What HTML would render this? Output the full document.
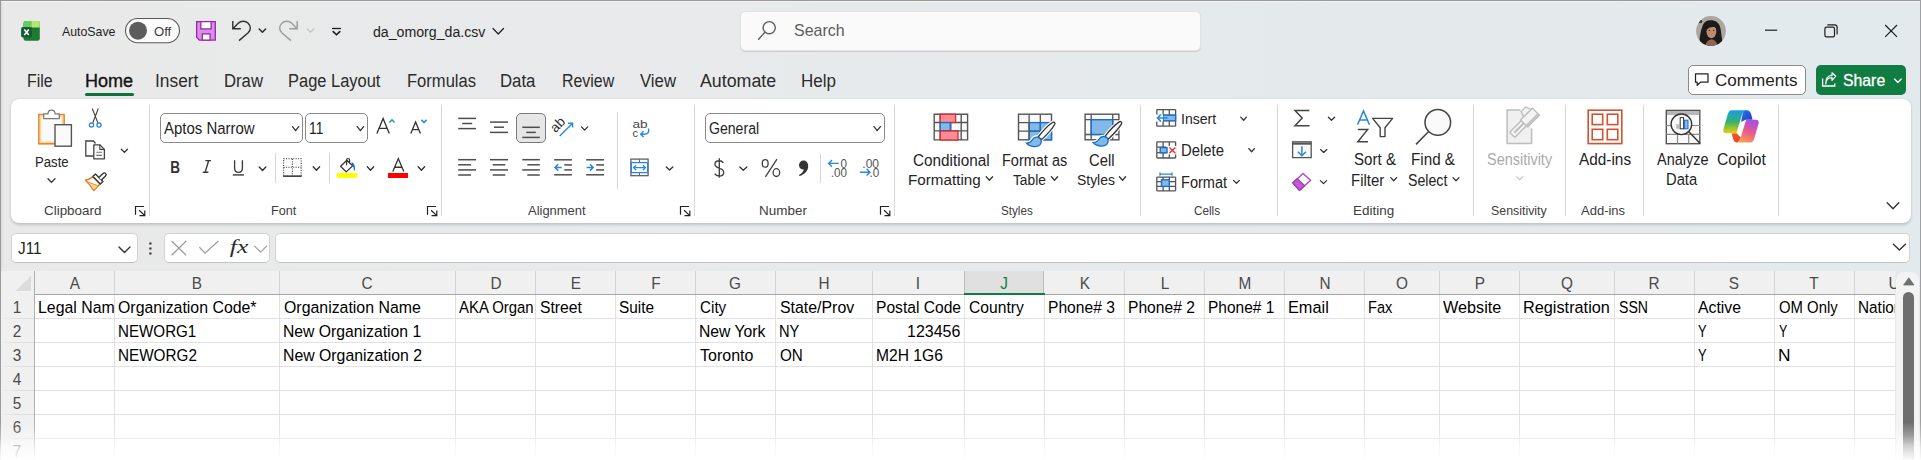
<!DOCTYPE html>
<html><head><meta charset="utf-8">
<style>
*{margin:0;padding:0}
html,body{width:1921px;height:460px;overflow:hidden}
body{position:relative;background:linear-gradient(90deg,#e9e9e9 0%,#e8eaeb 35%,#e5eaec 60%,#e3eaed 100%);font-family:"Liberation Sans",sans-serif}
.t{position:absolute;white-space:nowrap;transform-origin:0 0}
.abs{position:absolute}
</style></head><body>
<!-- window border -->
<div class="abs" style="left:0;top:0;width:1921px;height:1px;background:#9a9a9a"></div><div class="abs" style="left:1px;top:1px;width:1919px;height:1px;background:rgba(255,255,255,0.45)"></div>
<div class="abs" style="left:0;top:0;width:1px;height:460px;background:#9a9a9a;box-shadow:1px 0 2px rgba(0,0,0,0.10)"></div>
<div class="abs" style="left:1920px;top:0;width:1px;height:460px;background:#a0a0a0"></div>

<!-- search box -->
<div class="abs" style="left:741px;top:12px;width:459px;height:38px;background:#fafafa;border-radius:4.5px;box-shadow:0 0 0 1px #e2e2e2,0 1px 1px 1px rgba(0,0,0,0.12)"></div>
<!-- comments / share -->
<div class="abs" style="left:1688px;top:65px;width:118px;height:30px;background:#fff;border:1px solid #8a8a8a;border-radius:5px;box-sizing:border-box"></div>
<div class="abs" style="left:1816px;top:65px;width:90px;height:30px;background:#107c41;border-radius:5px"></div>
<!-- home underline -->
<div class="abs" style="left:85px;top:93px;width:49px;height:3px;background:#0f703b;border-radius:2px"></div>

<!-- ribbon card -->
<div class="abs" style="left:11px;top:99px;width:1900px;height:124px;background:#fff;border-radius:8px;box-shadow:0 1.5px 3px rgba(0,0,0,0.16),0 0 1px rgba(0,0,0,0.12)"></div>
<!-- group separators -->
<div class="abs" style="left:149px;top:105px;width:1px;height:111px;background:#d6d6d6"></div><div class="abs" style="left:441px;top:105px;width:1px;height:111px;background:#d6d6d6"></div><div class="abs" style="left:694px;top:105px;width:1px;height:111px;background:#d6d6d6"></div><div class="abs" style="left:894px;top:105px;width:1px;height:111px;background:#d6d6d6"></div><div class="abs" style="left:1140px;top:105px;width:1px;height:111px;background:#d6d6d6"></div><div class="abs" style="left:1277px;top:105px;width:1px;height:111px;background:#d6d6d6"></div><div class="abs" style="left:1473px;top:105px;width:1px;height:111px;background:#d6d6d6"></div><div class="abs" style="left:1565px;top:105px;width:1px;height:111px;background:#d6d6d6"></div><div class="abs" style="left:1643px;top:105px;width:1px;height:111px;background:#d6d6d6"></div><div class="abs" style="left:1778px;top:105px;width:1px;height:111px;background:#d6d6d6"></div>
<div class="abs" style="left:617px;top:112px;width:1px;height:77px;background:#d6d6d6"></div>
<div class="abs" style="left:275px;top:153px;width:1px;height:30px;background:#d6d6d6"></div>
<div class="abs" style="left:329px;top:153px;width:1px;height:30px;background:#d6d6d6"></div>
<div class="abs" style="left:820px;top:154px;width:1px;height:29px;background:#d6d6d6"></div>
<!-- combo boxes -->
<div class="abs" style="left:160px;top:113px;width:143px;height:30px;border:1px solid #8a8a8a;border-radius:5px;box-sizing:border-box"></div>
<div class="abs" style="left:305px;top:113px;width:63px;height:30px;border:1px solid #8a8a8a;border-radius:5px;box-sizing:border-box"></div>
<div class="abs" style="left:705px;top:113px;width:180px;height:30px;border:1px solid #8a8a8a;border-radius:5px;box-sizing:border-box"></div>
<div class="abs" style="left:516px;top:113px;width:30px;height:30px;background:#e6e6e6;border:1px solid #7a7a7a;border-radius:5px;box-sizing:border-box"></div>

<!-- formula bar -->
<div class="abs" style="left:11px;top:233px;width:127px;height:30px;background:#fff;border:1px solid #d2d2d2;border-bottom-color:#c2c2c2;border-radius:5px;box-sizing:border-box"></div>
<div class="abs" style="left:164px;top:233px;width:106px;height:30px;background:#fff;border:1px solid #d2d2d2;border-bottom-color:#c2c2c2;border-radius:5px;box-sizing:border-box"></div>
<div class="abs" style="left:275px;top:233px;width:1635px;height:30px;background:#fff;border:1px solid #d2d2d2;border-bottom-color:#c2c2c2;border-radius:5px;box-sizing:border-box"></div>

<!-- grid -->
<div class="abs" style="left:1px;top:271px;width:1894px;height:24px;background:#f0f0f0"></div>
<div class="abs" style="left:1px;top:295px;width:34px;height:170px;background:#f0f0f0"></div>
<div class="abs" style="left:35px;top:295px;width:1860px;height:170px;background:#fff"></div>
<div style="position:absolute;left:114px;top:271px;width:1px;height:23px;background:#d4d4d4"></div><div style="position:absolute;left:114px;top:295px;width:1px;height:170px;background:#e1e1e1"></div><div style="position:absolute;left:279px;top:271px;width:1px;height:23px;background:#d4d4d4"></div><div style="position:absolute;left:279px;top:295px;width:1px;height:170px;background:#e1e1e1"></div><div style="position:absolute;left:455px;top:271px;width:1px;height:23px;background:#d4d4d4"></div><div style="position:absolute;left:455px;top:295px;width:1px;height:170px;background:#e1e1e1"></div><div style="position:absolute;left:535px;top:271px;width:1px;height:23px;background:#d4d4d4"></div><div style="position:absolute;left:535px;top:295px;width:1px;height:170px;background:#e1e1e1"></div><div style="position:absolute;left:615px;top:271px;width:1px;height:23px;background:#d4d4d4"></div><div style="position:absolute;left:615px;top:295px;width:1px;height:170px;background:#e1e1e1"></div><div style="position:absolute;left:695px;top:271px;width:1px;height:23px;background:#d4d4d4"></div><div style="position:absolute;left:695px;top:295px;width:1px;height:170px;background:#e1e1e1"></div><div style="position:absolute;left:775px;top:271px;width:1px;height:23px;background:#d4d4d4"></div><div style="position:absolute;left:775px;top:295px;width:1px;height:170px;background:#e1e1e1"></div><div style="position:absolute;left:872px;top:271px;width:1px;height:23px;background:#d4d4d4"></div><div style="position:absolute;left:872px;top:295px;width:1px;height:170px;background:#e1e1e1"></div><div style="position:absolute;left:964px;top:271px;width:1px;height:23px;background:#d4d4d4"></div><div style="position:absolute;left:964px;top:295px;width:1px;height:170px;background:#e1e1e1"></div><div style="position:absolute;left:964px;top:271px;width:80px;height:22px;background:#e0e0e0;border-left:1px solid #bdbdbd;border-right:1px solid #bdbdbd;box-sizing:border-box"></div><div style="position:absolute;left:964px;top:293px;width:81px;height:2px;background:#107c41"></div><div style="position:absolute;left:1044px;top:295px;width:1px;height:170px;background:#e1e1e1"></div><div style="position:absolute;left:1124px;top:271px;width:1px;height:23px;background:#d4d4d4"></div><div style="position:absolute;left:1124px;top:295px;width:1px;height:170px;background:#e1e1e1"></div><div style="position:absolute;left:1204px;top:271px;width:1px;height:23px;background:#d4d4d4"></div><div style="position:absolute;left:1204px;top:295px;width:1px;height:170px;background:#e1e1e1"></div><div style="position:absolute;left:1284px;top:271px;width:1px;height:23px;background:#d4d4d4"></div><div style="position:absolute;left:1284px;top:295px;width:1px;height:170px;background:#e1e1e1"></div><div style="position:absolute;left:1364px;top:271px;width:1px;height:23px;background:#d4d4d4"></div><div style="position:absolute;left:1364px;top:295px;width:1px;height:170px;background:#e1e1e1"></div><div style="position:absolute;left:1439px;top:271px;width:1px;height:23px;background:#d4d4d4"></div><div style="position:absolute;left:1439px;top:295px;width:1px;height:170px;background:#e1e1e1"></div><div style="position:absolute;left:1519px;top:271px;width:1px;height:23px;background:#d4d4d4"></div><div style="position:absolute;left:1519px;top:295px;width:1px;height:170px;background:#e1e1e1"></div><div style="position:absolute;left:1614px;top:271px;width:1px;height:23px;background:#d4d4d4"></div><div style="position:absolute;left:1614px;top:295px;width:1px;height:170px;background:#e1e1e1"></div><div style="position:absolute;left:1694px;top:271px;width:1px;height:23px;background:#d4d4d4"></div><div style="position:absolute;left:1694px;top:295px;width:1px;height:170px;background:#e1e1e1"></div><div style="position:absolute;left:1774px;top:271px;width:1px;height:23px;background:#d4d4d4"></div><div style="position:absolute;left:1774px;top:295px;width:1px;height:170px;background:#e1e1e1"></div><div style="position:absolute;left:1854px;top:271px;width:1px;height:23px;background:#d4d4d4"></div><div style="position:absolute;left:1854px;top:295px;width:1px;height:170px;background:#e1e1e1"></div><div style="position:absolute;left:1934px;top:271px;width:1px;height:23px;background:#d4d4d4"></div><div style="position:absolute;left:1934px;top:295px;width:1px;height:170px;background:#e1e1e1"></div><div style="position:absolute;left:35px;top:318px;width:1860px;height:1px;background:#e1e1e1"></div><div style="position:absolute;left:0px;top:318px;width:34px;height:1px;background:linear-gradient(90deg,rgba(222,222,222,0) 0%,#dedede 55%)"></div><div style="position:absolute;left:35px;top:342px;width:1860px;height:1px;background:#e1e1e1"></div><div style="position:absolute;left:0px;top:342px;width:34px;height:1px;background:linear-gradient(90deg,rgba(222,222,222,0) 0%,#dedede 55%)"></div><div style="position:absolute;left:35px;top:366px;width:1860px;height:1px;background:#e1e1e1"></div><div style="position:absolute;left:0px;top:366px;width:34px;height:1px;background:linear-gradient(90deg,rgba(222,222,222,0) 0%,#dedede 55%)"></div><div style="position:absolute;left:35px;top:390px;width:1860px;height:1px;background:#e1e1e1"></div><div style="position:absolute;left:0px;top:390px;width:34px;height:1px;background:linear-gradient(90deg,rgba(222,222,222,0) 0%,#dedede 55%)"></div><div style="position:absolute;left:35px;top:414px;width:1860px;height:1px;background:#e1e1e1"></div><div style="position:absolute;left:0px;top:414px;width:34px;height:1px;background:linear-gradient(90deg,rgba(222,222,222,0) 0%,#dedede 55%)"></div><div style="position:absolute;left:35px;top:438px;width:1860px;height:1px;background:#e1e1e1"></div><div style="position:absolute;left:0px;top:438px;width:34px;height:1px;background:linear-gradient(90deg,rgba(222,222,222,0) 0%,#dedede 55%)"></div><div style="position:absolute;left:35px;top:462px;width:1860px;height:1px;background:#e1e1e1"></div><div style="position:absolute;left:0px;top:462px;width:34px;height:1px;background:linear-gradient(90deg,rgba(222,222,222,0) 0%,#dedede 55%)"></div>
<div class="abs" style="left:35px;top:294px;width:1860px;height:1px;background:#a6a6a6"></div>
<div class="abs" style="left:34px;top:271px;width:1px;height:190px;background:#b0b0b0"></div>
<div class="abs" style="left:964px;top:293px;width:81px;height:2px;background:#107c41"></div>

<svg class="abs" style="left:0;top:0" width="1921" height="460" viewBox="0 0 1921 460">
<defs><clipPath id="xlc"><rect x="23.5" y="21" width="16.3" height="19.8" rx="2.2"/></clipPath></defs>
<g clip-path="url(#xlc)"><rect x="23" y="20" width="18" height="22" fill="#1e7a32"/>
<rect x="23" y="20" width="8.3" height="7.5" fill="#64cf5f"/><rect x="31.3" y="20" width="9" height="7.5" fill="#b4e86f"/></g>
<rect x="21.1" y="27" width="10.9" height="10.5" rx="1.8" fill="#145c33"/>
<path d="M24.3,29.6 L28.8,35 M28.8,29.6 L24.3,35" stroke="#fff" stroke-width="1.6"/>
<rect x="125.5" y="18.5" width="54" height="24.2" rx="12.1" fill="#fbfbfb" stroke="#5a5a5a" stroke-width="1.1"/>
<circle cx="138" cy="30.7" r="9" fill="#5c5c5c"/>
<path d="M196.6,21.6 H215.3 V40.1 H199.4 L196.6,37.3 Z" fill="#d98fe3" stroke="#9a27ad" stroke-width="1.3"/>
<rect x="200.8" y="21.6" width="10.3" height="7.3" fill="#fff" stroke="#9a27ad" stroke-width="1.3"/>
<rect x="202.3" y="33.9" width="7.8" height="6.2" fill="#fff" stroke="#9a27ad" stroke-width="1.3"/>
<path d="M232.8,21 V28.8 H240.8 M233.2,28.4 L238.2,23.3 C241,20.5 245.5,20.5 248.2,23.2 C251,26 251,30 248.2,32.8 L239,40.6" fill="none" stroke="#333" stroke-width="1.45"/>
<polyline points="259.2,29 262.4,32.2 265.6,29" fill="none" stroke="#2b2b2b" stroke-width="1.5" stroke-linecap="round" stroke-linejoin="round"/>
<path d="M297.2,21 V28.8 H289.2 M296.8,28.4 L291.8,23.3 C289,20.5 284.5,20.5 281.8,23.2 C279,26 279,30 281.8,32.8 L291,40.6" fill="none" stroke="#9e9e9e" stroke-width="1.45"/>
<polyline points="307.2,29 310.4,32.2 313.6,29" fill="none" stroke="#c4c4c4" stroke-width="1.3" stroke-linecap="round" stroke-linejoin="round"/>
<path d="M332,28.5 H341" stroke="#1f1f1f" stroke-width="1.3"/>
<polyline points="333.2,31.6 336.5,34.8 339.8,31.6" fill="none" stroke="#1f1f1f" stroke-width="1.6" stroke-linecap="round" stroke-linejoin="round"/>
<polyline points="493,28.5 498.25,34 503.5,28.5" fill="none" stroke="#242424" stroke-width="1.3" stroke-linecap="round" stroke-linejoin="round"/>
<circle cx="769.2" cy="27.7" r="6.1" fill="none" stroke="#5f5f5f" stroke-width="1.4"/><path d="M764.9,32.2 L758.6,39.2" stroke="#5f5f5f" stroke-width="1.4" stroke-linecap="round"/>
<defs><clipPath id="avc"><circle cx="1711" cy="31" r="14.9"/></clipPath></defs>
<g clip-path="url(#avc)"><rect x="1695" y="15" width="32" height="32" fill="#aba79f"/>
<circle cx="1700.5" cy="21.5" r="1.8" fill="#2c3b2a"/>
<path d="M1699.5,47 C1699,39 1700.5,31 1702.5,26 C1704.5,21 1707.5,20.2 1711,20.2 C1715,20.2 1718.5,22.2 1720,26.5 C1721.6,31.5 1721,39 1724.5,47 Z" fill="#1e1a18"/>
<path d="M1705,47 C1706,42.5 1708,39.5 1711.5,39.5 C1715,39.5 1717,42.5 1718,47 Z" fill="#8f6656"/>
<ellipse cx="1711.4" cy="31.4" rx="4.9" ry="6.9" fill="#b98c74"/>
<path d="M1705.8,30.5 C1705.8,25 1708.5,23.6 1711.2,23.6 C1714.2,23.6 1716.8,25.6 1717,28.5 C1714.5,26.2 1709.5,26.5 1705.8,30.5 Z" fill="#1e1a18"/>
<circle cx="1709.3" cy="30.4" r="0.7" fill="#3a2a22"/><circle cx="1713.7" cy="30.4" r="0.7" fill="#3a2a22"/>
</g>
<path d="M1765,30.2 H1777.2" stroke="#1f1f1f" stroke-width="1.2"/>
<rect x="1824.9" y="27.1" width="9.6" height="9.8" rx="1.6" fill="none" stroke="#1f1f1f" stroke-width="1.2"/><path d="M1827.3,24.8 H1834.6 C1836.2,24.8 1837.1,25.8 1837.1,27.3 V34.6" fill="none" stroke="#1f1f1f" stroke-width="1.2"/>
<path d="M1885.2,25 L1897,36.8 M1897,25 L1885.2,36.8" stroke="#1f1f1f" stroke-width="1.2"/>
<path d="M1695.5,73.8 H1708 V82.2 H1700.5 L1697.2,85.3 V82.2 H1695.5 Z" fill="none" stroke="#242424" stroke-width="1.25" stroke-linejoin="round"/>
<path d="M1822.6,78.5 V86 H1834.8 V83.5" fill="none" stroke="#fff" stroke-width="1.3"/><path d="M1825.8,84 C1825.8,79.5 1828.5,77.6 1832,77.6 V80.4 L1835.8,76.2 L1832,72.8 V75.4 C1827.5,75.4 1825.5,79 1825.8,84 Z" fill="none" stroke="#fff" stroke-width="1.2" stroke-linejoin="round"/>
<polyline points="1894.5,79 1897.85,82.5 1901.2,79" fill="none" stroke="#fff" stroke-width="1.3" stroke-linecap="round" stroke-linejoin="round"/>
<rect x="38.9" y="114.6" width="25.2" height="29.2" fill="#fafafa" stroke="#e8832a" stroke-width="1.6"/>
<rect x="40.5" y="116.2" width="22" height="26" fill="none" stroke="#fcd58e" stroke-width="1.4"/>
<path d="M43.7,113.8 H48 C48,108.8 55,108.8 55,113.8 H59.3 V118.6 H43.7 Z" fill="#fff" stroke="#7a7a7a" stroke-width="1.3" stroke-linejoin="round"/>
<rect x="55" y="124.7" width="16.4" height="21.5" fill="#fafafa" stroke="#555" stroke-width="1.4"/>
<polyline points="48,178.8 51.5,182.4 55,178.8" fill="none" stroke="#333" stroke-width="1.3" stroke-linecap="round" stroke-linejoin="round"/>
<path d="M92.3,108.5 L97.8,122.8 M98.3,108.5 L92.8,122.8" stroke="#444" stroke-width="1.1"/>
<circle cx="91.5" cy="125.1" r="2.1" fill="#fff" stroke="#2b88d8" stroke-width="1.3"/><circle cx="99" cy="125.1" r="2.1" fill="#fff" stroke="#2b88d8" stroke-width="1.3"/>
<path d="M93.2,156 H85.8 V141 H93.5 L95.5,143.5" fill="none" stroke="#444" stroke-width="1.3"/>
<path d="M93.8,144.8 H99.8 L104.4,149.4 V158.8 H93.8 Z" fill="#fafafa" stroke="#444" stroke-width="1.3" stroke-linejoin="round"/><path d="M99.8,144.8 V149.4 H104.4" fill="none" stroke="#444" stroke-width="1.1"/>
<path d="M96.3,152.2 H102 M96.3,155.4 H102" stroke="#777" stroke-width="1.1"/>
<polyline points="121.3,149.3 124.4,152.4 127.5,149.3" fill="none" stroke="#333" stroke-width="1.3" stroke-linecap="round" stroke-linejoin="round"/>
<path d="M85.4,180.3 C88,179.8 90.5,178.6 92.9,176.6 L100.2,183.9 C98,186 96,188.2 93.8,190.5 C91.5,187 88.5,183.2 85.4,180.3 Z" fill="#fafafa" stroke="#e8832a" stroke-width="1.5" stroke-linejoin="round"/>
<path d="M89.8,183.6 L97.4,186.2 L93.9,189.6 Z" fill="#fbd98a"/><path d="M87.2,181.8 L97.8,185.8" stroke="#e8832a" stroke-width="1"/>
<path d="M92.9,176.6 L95.4,174.1 L102.9,181.5 L100.3,184 Z" fill="#fff" stroke="#333" stroke-width="1.35" stroke-linejoin="round"/>
<path d="M98.9,177.6 L103,173.5 C103.8,172.7 105,172.7 105.6,173.4 C106.3,174.1 106.3,175.2 105.5,176 L101.4,180.1" fill="#fff" stroke="#333" stroke-width="1.35"/>
<path d="M135.5,214.7 V206.5 H144.1" fill="none" stroke="#222" stroke-width="1.2"/><path d="M139.1,210.3 L144.8,215.6 M144.8,210.5 V215.6 H139.5" fill="none" stroke="#222" stroke-width="1.2"/>
<path d="M427.5,214.7 V206.5 H436.1" fill="none" stroke="#222" stroke-width="1.2"/><path d="M431.1,210.3 L436.8,215.6 M436.8,210.5 V215.6 H431.5" fill="none" stroke="#222" stroke-width="1.2"/>
<path d="M680.5,214.7 V206.5 H689.1" fill="none" stroke="#222" stroke-width="1.2"/><path d="M684.1,210.3 L689.8,215.6 M689.8,210.5 V215.6 H684.5" fill="none" stroke="#222" stroke-width="1.2"/>
<path d="M880.5,214.7 V206.5 H889.1" fill="none" stroke="#222" stroke-width="1.2"/><path d="M884.1,210.3 L889.8,215.6 M889.8,210.5 V215.6 H884.5" fill="none" stroke="#222" stroke-width="1.2"/>
<polyline points="292.5,126.6 295.6,130.6 298.7,126.6" fill="none" stroke="#333" stroke-width="1.3" stroke-linecap="round" stroke-linejoin="round"/>
<polyline points="357.2,126.6 360.4,130.6 363.6,126.6" fill="none" stroke="#333" stroke-width="1.3" stroke-linecap="round" stroke-linejoin="round"/>
<path d="M376.9,133.6 L383.1,118.6 L389.3,133.6 M379.3,128.3 H386.9" fill="none" stroke="#333" stroke-width="1.35"/>
<polyline points="389.4,122.6 392,119.8 394.6,122.6" fill="none" stroke="#2b88d8" stroke-width="1.5"/>
<path d="M410.8,133.6 L415.6,122 L420.4,133.6 M412.5,129.6 H418.7" fill="none" stroke="#333" stroke-width="1.35"/>
<polyline points="421.4,119.9 424,122.4 426.6,119.9" fill="none" stroke="#2b88d8" stroke-width="1.5"/>
<text x="170.2" y="172.9" font-family="Liberation Sans" font-weight="bold" font-size="17.4" fill="#333" textLength="9.8" lengthAdjust="spacingAndGlyphs">B</text>
<path d="M205.4,160.6 H211 M202.8,172.3 H208.4 M208.6,160.8 L205.2,172.1" fill="none" stroke="#3a3a3a" stroke-width="1.4"/>
<path d="M234.6,160.2 V167.7 C234.6,170.8 236.3,172.4 238.5,172.4 C240.7,172.4 242.4,170.8 242.4,167.7 V160.2" fill="none" stroke="#3a3a3a" stroke-width="1.35"/><path d="M232.8,174.9 H243.9" stroke="#444" stroke-width="1.5"/>
<polyline points="259.2,167 262.5,170.4 265.8,167" fill="none" stroke="#333" stroke-width="1.4" stroke-linecap="round" stroke-linejoin="round"/>
<rect x="283.6" y="158.8" width="17.6" height="17.2" fill="none" stroke="#444" stroke-width="1.1" stroke-dasharray="1.1 1.3"/>
<path d="M292.4,158.8 V176 M283.6,167.2 H301.2" fill="none" stroke="#444" stroke-width="1.1" stroke-dasharray="1.1 1.3"/>
<path d="M283.1,176.2 H301.7" stroke="#444" stroke-width="1.6"/>
<polyline points="313.2,166.8 316.4,170.2 319.6,166.8" fill="none" stroke="#333" stroke-width="1.4" stroke-linecap="round" stroke-linejoin="round"/>
<path d="M340.6,166.2 L346.9,160.3 L352.6,165.9 L346.2,171.9 Z" fill="#fff" stroke="#333" stroke-width="1.3" stroke-linejoin="round"/>
<path d="M346.6,165.3 V160 C346.6,158 349.6,158 349.6,160 V163.2" fill="none" stroke="#333" stroke-width="1.2"/>
<path d="M351.6,162.6 C353.5,162.4 355.2,164.5 355,170.4 L353.9,170.5 C353.8,167.5 353,165.5 351.6,164.5 Z" fill="#1a6fc4"/>
<rect x="337" y="173" width="20" height="5" fill="#ffff00"/>
<polyline points="367.3,166.8 370.5,170.2 373.7,166.8" fill="none" stroke="#333" stroke-width="1.4" stroke-linecap="round" stroke-linejoin="round"/>
<path d="M392.8,171.4 L398.3,158.6 L403.8,171.4 M394.9,167.2 H401.7" fill="none" stroke="#333" stroke-width="1.35"/>
<rect x="388" y="173" width="20" height="5" fill="#ff0000"/>
<polyline points="418.2,166.8 421.4,170.2 424.6,166.8" fill="none" stroke="#333" stroke-width="1.4" stroke-linecap="round" stroke-linejoin="round"/>
<path d="M458.2,118.4 H476" stroke="#4d4d4d" stroke-width="1.5"/>
<path d="M462.2,123.5 H472.2" stroke="#4d4d4d" stroke-width="1.5"/>
<path d="M458.2,128.6 H476" stroke="#4d4d4d" stroke-width="1.5"/>
<path d="M490,122.1 H508" stroke="#4d4d4d" stroke-width="1.5"/>
<path d="M494,127.2 H504" stroke="#4d4d4d" stroke-width="1.5"/>
<path d="M490,132.4 H508" stroke="#4d4d4d" stroke-width="1.5"/>
<path d="M522.3,127.3 H539.8" stroke="#4d4d4d" stroke-width="1.5"/>
<path d="M526.3,132.4 H535.8" stroke="#4d4d4d" stroke-width="1.5"/>
<path d="M522.3,137.4 H539.8" stroke="#4d4d4d" stroke-width="1.5"/>
<text x="0" y="0" font-family="Liberation Sans" font-size="13.6" fill="#333" transform="translate(555.4,133.2) rotate(-45)">ab</text>
<path d="M559.8,136 L572.6,123.3 M568,123.3 H572.6 V127.6" fill="none" stroke="#2b88d8" stroke-width="1.4"/>
<polyline points="581.5,126.9 584.6,130.1 587.7,126.9" fill="none" stroke="#333" stroke-width="1.3" stroke-linecap="round" stroke-linejoin="round"/>
<path d="M458.2,159.7 H476" stroke="#4d4d4d" stroke-width="1.5"/>
<path d="M458.2,164.8 H471" stroke="#4d4d4d" stroke-width="1.5"/>
<path d="M458.2,169.9 H476" stroke="#4d4d4d" stroke-width="1.5"/>
<path d="M458.2,175.0 H471" stroke="#4d4d4d" stroke-width="1.5"/>
<path d="M490,159.7 H508" stroke="#4d4d4d" stroke-width="1.5"/>
<path d="M492.7,164.8 H505.3" stroke="#4d4d4d" stroke-width="1.5"/>
<path d="M490,169.9 H508" stroke="#4d4d4d" stroke-width="1.5"/>
<path d="M492.7,175.0 H505.3" stroke="#4d4d4d" stroke-width="1.5"/>
<path d="M522.3,159.7 H539.8" stroke="#4d4d4d" stroke-width="1.5"/>
<path d="M527.3,164.8 H539.8" stroke="#4d4d4d" stroke-width="1.5"/>
<path d="M522.3,169.9 H539.8" stroke="#4d4d4d" stroke-width="1.5"/>
<path d="M527.3,175.0 H539.8" stroke="#4d4d4d" stroke-width="1.5"/>
<path d="M554.2,159.8 H571.9" stroke="#4d4d4d" stroke-width="1.5"/>
<path d="M564.3,164.9 H571.9" stroke="#4d4d4d" stroke-width="1.5"/>
<path d="M564.3,169.9 H571.9" stroke="#4d4d4d" stroke-width="1.5"/>
<path d="M554.2,174.8 H571.9" stroke="#4d4d4d" stroke-width="1.5"/>
<path d="M586.2,159.8 H604" stroke="#4d4d4d" stroke-width="1.5"/>
<path d="M596.2,164.9 H604" stroke="#4d4d4d" stroke-width="1.5"/>
<path d="M596.2,169.9 H604" stroke="#4d4d4d" stroke-width="1.5"/>
<path d="M586.2,174.8 H604" stroke="#4d4d4d" stroke-width="1.5"/>
<path d="M561.7,167.4 H555.2 M558.2,164.2 L555,167.4 L558.2,170.6" fill="none" stroke="#2b88d8" stroke-width="1.5"/>
<path d="M586.5,167.4 H593 M590,164.2 L593.2,167.4 L590,170.6" fill="none" stroke="#2b88d8" stroke-width="1.5"/>
<text x="632.5" y="127.7" font-family="Liberation Sans" font-size="11.2" fill="#444" textLength="15.2" lengthAdjust="spacingAndGlyphs">ab</text>
<text x="632.5" y="136.5" font-family="Liberation Sans" font-size="11.2" fill="#444">c</text>
<path d="M648.4,128.6 C649.6,131.6 647.8,134.2 644.6,134.2 H641 M643.6,131.2 L640.6,134.2 L643.6,137" fill="none" stroke="#2b88d8" stroke-width="1.4"/>
<rect x="630.9" y="159.1" width="17.2" height="16.6" fill="#fff" stroke="#555" stroke-width="1.2"/>
<path d="M639.5,159.1 V162.4 M639.5,172.6 V175.7" stroke="#666" stroke-width="1.1"/>
<rect x="631.4" y="162.6" width="16.2" height="10" fill="#fff" stroke="#2b88d8" stroke-width="1.3"/>
<path d="M633.6,167.6 H645.4 M636,165.2 L633.6,167.6 L636,170 M643,165.2 L645.4,167.6 L643,170" fill="none" stroke="#2b88d8" stroke-width="1.3"/>
<polyline points="666.3,167 669.55,170.1 672.8,167" fill="none" stroke="#333" stroke-width="1.4" stroke-linecap="round" stroke-linejoin="round"/>
<polyline points="874,126.6 877.2,130.6 880.4,126.6" fill="none" stroke="#333" stroke-width="1.3" stroke-linecap="round" stroke-linejoin="round"/>
<path d="M719.3,158.2 V177.8 M723.3,162.8 C722.4,161.4 721,160.7 719.2,160.7 C716.6,160.7 715,162.1 715,164.2 C715,166.3 716.6,167.2 719.2,168.1 C722,169 723.7,170.2 723.7,172.5 C723.7,174.7 721.9,176 719.2,176 C717.2,176 715.6,175.2 714.7,173.7" fill="none" stroke="#404040" stroke-width="1.35"/>
<polyline points="739.8,167 743.3,170.2 746.8,167" fill="none" stroke="#333" stroke-width="1.3" stroke-linecap="round" stroke-linejoin="round"/>
<ellipse cx="765.2" cy="163.4" rx="2.9" ry="3.8" fill="none" stroke="#404040" stroke-width="1.3"/><ellipse cx="776.4" cy="172.6" rx="3.3" ry="3.9" fill="none" stroke="#404040" stroke-width="1.3"/><path d="M777,159.2 L765.4,176.8" stroke="#404040" stroke-width="1.3"/>
<path d="M803.5,160.5 C806.6,160.5 808.2,163 808.2,166.2 C808.2,170.6 804.6,174.6 799.4,176 L799,174.9 C801.8,173.6 803.4,171.8 803.8,169.6 C801,169.8 799,168 799,165.3 C799,162.6 800.8,160.5 803.5,160.5 Z" fill="#333"/>
<path d="M838.8,163.4 H828.8 M832,160 L828.6,163.4 L832,166.8" fill="none" stroke="#2b88d8" stroke-width="1.4"/>
<text x="840.6" y="168.2" font-family="Liberation Sans" font-size="12.4" fill="#555" textLength="6.5" lengthAdjust="spacingAndGlyphs">0</text>
<text x="830.8" y="176.8" font-family="Liberation Sans" font-size="12.4" fill="#555" textLength="16.2" lengthAdjust="spacingAndGlyphs">.00</text>
<text x="862.3" y="168.2" font-family="Liberation Sans" font-size="12.4" fill="#555" textLength="16.8" lengthAdjust="spacingAndGlyphs">.00</text>
<text x="869.4" y="176.8" font-family="Liberation Sans" font-size="12.4" fill="#555" textLength="9.8" lengthAdjust="spacingAndGlyphs">.0</text>
<path d="M859.8,172.2 H869.8 M866.6,168.8 L870,172.2 L866.6,175.6" fill="none" stroke="#2b88d8" stroke-width="1.4"/>
<rect x="934.2" y="114.2" width="33.4" height="25.6" fill="#fafafa"/>
<path d="M934.2,114.2 H967.6 V139.9 H934.2 Z M934.2,122.5 H967.6 M934.2,130.9 H967.6 M940.2,114.2 V139.9 M950.8,114.2 V139.9 M961.2,114.2 V139.9" fill="none" stroke="#555" stroke-width="1.4"/>
<rect x="940.2" y="114.2" width="15.4" height="8.3" fill="#ff8c96" stroke="#d42b2b" stroke-width="1.3"/>
<rect x="940.2" y="122.6" width="10" height="8.1" fill="#83b9ea" stroke="#1a6fc4" stroke-width="1.3"/>
<rect x="940.2" y="131" width="17.8" height="9" fill="#ff8c96" stroke="#d42b2b" stroke-width="1.3"/>
<rect x="1018.5" y="114.2" width="33" height="25.6" fill="#fafafa" stroke="#555" stroke-width="1.4"/>
<rect x="1029.1" y="122.6" width="22.4" height="17.2" fill="#83b9ea" stroke="#1a6fc4" stroke-width="1.4"/>
<path d="M1029.1,114.2 V122.6 M1040.3,114.2 V139.8 M1018.5,122.6 H1029.1 M1018.5,131.2 H1051.5 M1029.1,122.6 V139.8" fill="none" stroke="#555" stroke-width="1.3"/>
<path d="M1040.3,122.6 V139.8 M1029.1,131.2 H1051.5" fill="none" stroke="#1a6fc4" stroke-width="1.3"/>
<rect x="1044" y="119" width="12" height="12" fill="#fff" opacity="0"/>
<g transform="translate(0,0)"><path d="M1038.2,137 C1042,132 1048,125.5 1052.4,122.5 C1053.8,121.6 1055.4,122.6 1054.8,124.2 C1052.5,128.5 1046.5,135 1041.6,139.6 Z" fill="#fff" stroke="#fff" stroke-width="3.4"/><path d="M1026.4,143.2 C1029.5,143.2 1031.2,141.5 1032.4,139.6 C1033.6,137.6 1035.6,136.8 1037.6,137.2 C1040.4,137.8 1042,140.4 1041,143 C1040,145.6 1037,146.8 1033.6,146.6 C1030.6,146.4 1028,145.2 1026.4,143.2 Z" fill="#fff" stroke="#fff" stroke-width="3.4"/><path d="M1038.2,137 C1042,132 1048,125.5 1052.4,122.5 C1053.8,121.6 1055.4,122.6 1054.8,124.2 C1052.5,128.5 1046.5,135 1041.6,139.6 Z" fill="#fafafa" stroke="#333" stroke-width="1.3"/><path d="M1026.4,143.2 C1029.5,143.2 1031.2,141.5 1032.4,139.6 C1033.6,137.6 1035.6,136.8 1037.6,137.2 C1040.4,137.8 1042,140.4 1041,143 C1040,145.6 1037,146.8 1033.6,146.6 C1030.6,146.4 1028,145.2 1026.4,143.2 Z" fill="#83b9ea" stroke="#1a6fc4" stroke-width="1.3"/></g>
<rect x="1085.1" y="114.2" width="33.8" height="25.6" fill="#fafafa" stroke="#555" stroke-width="1.4"/>
<path d="M1091.2,114.2 V139.8 M1112.7,114.2 V139.8 M1085.1,119.7 H1118.9 M1085.1,134.5 H1118.9" fill="none" stroke="#555" stroke-width="1.3"/>
<rect x="1091.2" y="119.7" width="21.5" height="14.8" fill="#83b9ea" stroke="#1a6fc4" stroke-width="1.4"/>
<g transform="translate(66.8,-0.6)"><path d="M1038.2,137 C1042,132 1048,125.5 1052.4,122.5 C1053.8,121.6 1055.4,122.6 1054.8,124.2 C1052.5,128.5 1046.5,135 1041.6,139.6 Z" fill="#fff" stroke="#fff" stroke-width="3.4"/><path d="M1026.4,143.2 C1029.5,143.2 1031.2,141.5 1032.4,139.6 C1033.6,137.6 1035.6,136.8 1037.6,137.2 C1040.4,137.8 1042,140.4 1041,143 C1040,145.6 1037,146.8 1033.6,146.6 C1030.6,146.4 1028,145.2 1026.4,143.2 Z" fill="#fff" stroke="#fff" stroke-width="3.4"/><path d="M1038.2,137 C1042,132 1048,125.5 1052.4,122.5 C1053.8,121.6 1055.4,122.6 1054.8,124.2 C1052.5,128.5 1046.5,135 1041.6,139.6 Z" fill="#fafafa" stroke="#333" stroke-width="1.3"/><path d="M1026.4,143.2 C1029.5,143.2 1031.2,141.5 1032.4,139.6 C1033.6,137.6 1035.6,136.8 1037.6,137.2 C1040.4,137.8 1042,140.4 1041,143 C1040,145.6 1037,146.8 1033.6,146.6 C1030.6,146.4 1028,145.2 1026.4,143.2 Z" fill="#83b9ea" stroke="#1a6fc4" stroke-width="1.3"/></g>
<polyline points="986.2,176.8 989.4000000000001,180.2 992.6,176.8" fill="none" stroke="#333" stroke-width="1.3" stroke-linecap="round" stroke-linejoin="round"/>
<polyline points="1051.4,176.8 1054.5,180.2 1057.6,176.8" fill="none" stroke="#333" stroke-width="1.3" stroke-linecap="round" stroke-linejoin="round"/>
<polyline points="1119.4,176.8 1122.5,180.2 1125.6,176.8" fill="none" stroke="#333" stroke-width="1.3" stroke-linecap="round" stroke-linejoin="round"/>
<rect x="1156.8" y="109.6" width="18.799999999999955" height="16.60000000000001" fill="#fafafa"/><path d="M1156.8,109.6 V126.2 M1163.1,109.6 V126.2 M1169.3,109.6 V126.2 M1175.6,109.6 V126.2 M1156.8,109.6 H1175.6 M1156.8,115.1 H1175.6 M1156.8,120.7 H1175.6 M1156.8,126.2 H1175.6 " fill="none" stroke="#555" stroke-width="1.3"/>
<rect x="1163" y="115.2" width="12.6" height="5.6" fill="#83b9ea" stroke="#1a6fc4" stroke-width="1.3"/><rect x="1155" y="114.4" width="8" height="7.2" fill="#fff"/>
<path d="M1167.5,118 H1157.4 M1160.9,114.6 L1157.4,118 L1160.9,121.4" fill="none" stroke="#2b88d8" stroke-width="1.5"/>
<rect x="1156.8" y="141.8" width="18.799999999999955" height="16.19999999999999" fill="#fafafa"/><path d="M1156.8,141.8 V158 M1163.1,141.8 V158 M1169.3,141.8 V158 M1175.6,141.8 V158 M1156.8,141.8 H1175.6 M1156.8,147.2 H1175.6 M1156.8,152.6 H1175.6 M1156.8,158.0 H1175.6 " fill="none" stroke="#555" stroke-width="1.3"/>
<rect x="1166" y="146" width="10.6" height="8.4" fill="#fff"/><rect x="1160.2" y="147.6" width="6.8" height="5.2" fill="#83b9ea" stroke="#1a6fc4" stroke-width="1.4"/>
<path d="M1169.4,147.6 L1175.4,153.2 M1175.4,147.6 L1169.4,153.2" stroke="#e8312f" stroke-width="1.4"/>
<rect x="1156.8" y="177.2" width="18.799999999999955" height="13.600000000000023" fill="#fafafa"/><path d="M1156.8,177.2 V190.8 M1163.1,177.2 V190.8 M1169.3,177.2 V190.8 M1175.6,177.2 V190.8 M1156.8,177.2 H1175.6 M1156.8,181.7 H1175.6 M1156.8,186.3 H1175.6 M1156.8,190.8 H1175.6 " fill="none" stroke="#555" stroke-width="1.3"/>
<rect x="1161.5" y="179.8" width="7.8" height="6.6" fill="#83b9ea" stroke="#1a6fc4" stroke-width="1.4"/>
<path d="M1160,174.2 H1172 M1160,172.6 V175.8 M1172,172.6 V175.8" fill="none" stroke="#2b88d8" stroke-width="1.3"/>
<polyline points="1240.8,117.1 1243.6,120.2 1246.4,117.1" fill="none" stroke="#333" stroke-width="1.3" stroke-linecap="round" stroke-linejoin="round"/>
<polyline points="1248.8,148.6 1251.6,151.8 1254.4,148.6" fill="none" stroke="#333" stroke-width="1.3" stroke-linecap="round" stroke-linejoin="round"/>
<polyline points="1233.6,180.4 1236.5,183.4 1239.4,180.4" fill="none" stroke="#333" stroke-width="1.3" stroke-linecap="round" stroke-linejoin="round"/>
<path d="M1309.4,110.4 H1295 L1302.2,118 L1295,125.8 H1309.6" fill="none" stroke="#444" stroke-width="1.5" stroke-linejoin="miter"/>
<polyline points="1328.4,117.2 1331.5,120.2 1334.6,117.2" fill="none" stroke="#333" stroke-width="1.3" stroke-linecap="round" stroke-linejoin="round"/>
<rect x="1292.6" y="141.8" width="18.6" height="15.8" fill="#fafafa" stroke="#555" stroke-width="1.3"/><path d="M1292.6,143.6 H1311.2" stroke="#555" stroke-width="2.2"/>
<path d="M1301.9,146.2 V155.6 M1297.9,151.7 L1301.9,155.7 L1305.9,151.7" fill="none" stroke="#2b88d8" stroke-width="1.5"/>
<polyline points="1320.6,149.6 1323.6999999999998,152.4 1326.8,149.6" fill="none" stroke="#333" stroke-width="1.3" stroke-linecap="round" stroke-linejoin="round"/>
<path d="M1292.8,182.9 L1303,173.4 L1310.6,180.2 L1299.4,190.4 Z" fill="#fafafa" stroke="#b146c2" stroke-width="1.4" stroke-linejoin="round"/>
<path d="M1292.8,182.9 L1297.2,178.8 L1304.6,185.8 L1299.4,190.4 Z" fill="#c15bd0" stroke="#a33bb5" stroke-width="1.3" stroke-linejoin="round"/>
<polyline points="1320.4,180.6 1323.5,183.6 1326.6,180.6" fill="none" stroke="#333" stroke-width="1.3" stroke-linecap="round" stroke-linejoin="round"/>
<path d="M1357.6,124.6 L1363.5,111 L1369.4,124.6 M1359.6,120 H1367.4" fill="none" stroke="#2b88d8" stroke-width="1.5"/>
<path d="M1357.8,129.6 H1367.6 L1357.8,141.8 H1368" fill="none" stroke="#444" stroke-width="1.5"/>
<path d="M1372.6,118.4 H1392.6 L1385,127.8 V136.6 H1380.2 V127.8 Z" fill="#fafafa" stroke="#444" stroke-width="1.4" stroke-linejoin="round"/>
<polyline points="1390.8,177.6 1393.6999999999998,180.8 1396.6,177.6" fill="none" stroke="#333" stroke-width="1.3" stroke-linecap="round" stroke-linejoin="round"/>
<circle cx="1437.8" cy="122.4" r="12.8" fill="#fafafa" stroke="#444" stroke-width="1.5"/><path d="M1428.7,131.5 L1416,144.4" stroke="#444" stroke-width="1.5"/>
<polyline points="1453,177.6 1456.0,180.8 1459,177.6" fill="none" stroke="#333" stroke-width="1.3" stroke-linecap="round" stroke-linejoin="round"/>
<path d="M1520.5,110 H1507.1 V143.4 H1531.6 V128.5" fill="#f0f0f0" stroke="#bdbdbd" stroke-width="1.5"/>
<g transform="translate(1519.6,127.4) rotate(-45)"><rect x="-10.5" y="-3.6" width="21" height="7.2" rx="1" fill="#f4f4f4" stroke="#bdbdbd" stroke-width="1.4"/><rect x="-7.5" y="-1" width="15" height="2" fill="#bdbdbd"/></g>
<g transform="translate(1530,117.6) rotate(-45)"><rect x="-8.4" y="-5" width="16.8" height="10" fill="#f4f4f4" stroke="#bdbdbd" stroke-width="1.4"/><rect x="-8.4" y="2.2" width="16.8" height="2.8" fill="#c4c4c4"/><path d="M-4,-5 L-2,-10.5 H4.5 L6.5,-5 Z" fill="#f4f4f4" stroke="#bdbdbd" stroke-width="1.3"/></g>
<polyline points="1516.6,176.6 1519.6999999999998,179.8 1522.8,176.6" fill="none" stroke="#c8c8c8" stroke-width="1.3" stroke-linecap="round" stroke-linejoin="round"/>
<rect x="1588.2" y="110.2" width="33.6" height="33.4" fill="none" stroke="#d35230" stroke-width="1.6"/>
<rect x="1592.2" y="114.2" width="10.5" height="10.4" fill="none" stroke="#d35230" stroke-width="1.6"/>
<rect x="1607.3" y="114.2" width="10.5" height="10.4" fill="none" stroke="#d35230" stroke-width="1.6"/>
<rect x="1592.2" y="129.3" width="10.5" height="10.4" fill="none" stroke="#d35230" stroke-width="1.6"/>
<rect x="1607.3" y="129.3" width="10.5" height="10.4" fill="none" stroke="#d35230" stroke-width="1.6"/>
<rect x="1666.3" y="110.4" width="33.5" height="33.3" fill="#fafafa" stroke="#555" stroke-width="1.4"/>
<rect x="1667" y="111" width="32.2" height="4" fill="#b8b8b8"/>
<path d="M1666.3,125.5 H1700 M1666.3,134.4 H1700 M1677.5,134.4 V143.8 M1688.7,134.4 V143.8" stroke="#8a8a8a" stroke-width="1.2"/>
<circle cx="1681.4" cy="124.3" r="10.3" fill="#fafafa" stroke="#333" stroke-width="1.4"/><path d="M1688.8,131.7 L1700.2,143.6" stroke="#333" stroke-width="1.5"/>
<rect x="1676.2" y="124.2" width="3.2" height="4.6" fill="#bdbdbd"/><rect x="1680.2" y="117.6" width="3.4" height="11.2" fill="#fff" stroke="#333" stroke-width="1"/><rect x="1684.4" y="120.2" width="3.6" height="8.6" fill="#83b9ea" stroke="#1a6fc4" stroke-width="1"/>
<defs>
<linearGradient id="cpA" x1="0" y1="0" x2="0" y2="1"><stop offset="0" stop-color="#1a9af0"/><stop offset="0.5" stop-color="#33b36a"/><stop offset="1" stop-color="#f0cc10"/></linearGradient>
<linearGradient id="cpB" x1="0.7" y1="0" x2="0.3" y2="1"><stop offset="0" stop-color="#a64ee8"/><stop offset="0.5" stop-color="#e85a8c"/><stop offset="1" stop-color="#fba24a"/></linearGradient>
<linearGradient id="cpC" x1="0" y1="0" x2="1" y2="1"><stop offset="0" stop-color="#2f6fe6"/><stop offset="1" stop-color="#1740c8"/></linearGradient>
<linearGradient id="cpD" x1="0" y1="0" x2="1" y2="1"><stop offset="0" stop-color="#f4592a"/><stop offset="1" stop-color="#e2402e"/></linearGradient>
</defs>
<path d="M1745,110.2 H1747 C1749.5,110.2 1750.7,112.5 1751.4,115 L1752.6,119.8 H1745.6 L1741.2,122 C1742,116 1743,111 1745,110.2 Z" fill="url(#cpC)"/>
<path d="M1736.5,133.2 H1731.6 L1732.9,138.2 C1733.7,141 1735,142.6 1737,142.6 C1738.8,142.2 1740,140 1740.8,137.5 Z" fill="url(#cpD)"/>
<path d="M1731.4,110.2 H1747 C1744,110.5 1742.5,113 1741.5,116 L1736.6,133.2 H1726 C1723.8,133.2 1722.8,131.4 1723.4,129.2 L1727.6,114.8 C1728.4,112 1729.8,110.2 1731.4,110.2 Z" fill="url(#cpA)"/>
<path d="M1747.2,119.8 H1756 C1758.2,119.8 1759.2,121.5 1758.6,123.6 L1754.4,138 C1753.6,140.8 1752.4,142.6 1750.6,142.6 H1735.4 C1738.4,142.3 1740,139.8 1740.9,136.8 L1745.6,121.6 C1746,120.4 1746.5,119.8 1747.2,119.8 Z" fill="url(#cpB)"/>
<polyline points="1887.2,202.8 1893.0,208.8 1898.8,202.8" fill="none" stroke="#333" stroke-width="1.4" stroke-linecap="round" stroke-linejoin="round"/>
<polyline points="119,247 124.5,252.6 130,247" fill="none" stroke="#333" stroke-width="1.4" stroke-linecap="round" stroke-linejoin="round"/>
<path d="M150.4,242.6 V244.4 M150.4,247.6 V249.4 M150.4,252.6 V254.4" stroke="#333" stroke-width="2.2"/>
<path d="M171.6,241 L186.2,255.2 M186.2,241 L171.6,255.2" stroke="#9e9e9e" stroke-width="1.3"/>
<path d="M199.4,247.2 L205,253.2 L218.4,241" fill="none" stroke="#9e9e9e" stroke-width="1.3"/>
<text x="229.8" y="253.2" font-family="Liberation Serif" font-style="italic" font-size="19" fill="#2b2b2b" textLength="18.4" lengthAdjust="spacingAndGlyphs">fx</text>
<polyline points="254.6,246.2 260.6,252.2 266.6,246.2" fill="none" stroke="#9e9e9e" stroke-width="1.2" stroke-linecap="round" stroke-linejoin="round"/>
<polyline points="1893.4,244.2 1899.4,250 1905.4,244.2" fill="none" stroke="#333" stroke-width="1.4" stroke-linecap="round" stroke-linejoin="round"/>
<path d="M31,275.8 V291 H15.6 Z" fill="#dcdcdc"/>
<path d="M1903.6,285 L1908.8,277.8 L1914,285 Z" fill="#6e6e6e" stroke="#6e6e6e" stroke-width="0.8" stroke-linejoin="round"/>
</svg>
<div class="t" style="left:62.30px;top:25.00px;font-size:13.33px;line-height:13.33px;color:#1f1f1f;transform:scaleX(0.9253);">AutoSave</div>
<div class="t" style="left:154.40px;top:25.00px;font-size:13.48px;line-height:13.48px;color:#3b3b3b;transform:scaleX(0.9736);">Off</div>
<div class="t" style="left:372.50px;top:25.00px;font-size:14.52px;line-height:14.52px;color:#1f1f1f;transform:scaleX(0.9739);">da_omorg_da.csv</div>
<div class="t" style="left:793.60px;top:22.00px;font-size:17.39px;line-height:17.39px;color:#5c5c5c;transform:scaleX(0.9193);">Search</div>
<div class="t" style="left:26.59px;top:73.00px;font-size:17.54px;line-height:17.54px;color:#2b2b2b;transform:scaleX(0.9057);">File</div>
<div class="t" style="left:155.01px;top:73.00px;font-size:17.54px;line-height:17.54px;color:#2b2b2b;transform:scaleX(0.9890);">Insert</div>
<div class="t" style="left:223.75px;top:73.00px;font-size:17.54px;line-height:17.54px;color:#2b2b2b;transform:scaleX(0.9516);">Draw</div>
<div class="t" style="left:287.76px;top:73.00px;font-size:17.54px;line-height:17.54px;color:#2b2b2b;transform:scaleX(0.9387);">Page Layout</div>
<div class="t" style="left:406.56px;top:73.00px;font-size:17.54px;line-height:17.54px;color:#2b2b2b;transform:scaleX(0.9447);">Formulas</div>
<div class="t" style="left:499.84px;top:73.00px;font-size:17.54px;line-height:17.54px;color:#2b2b2b;transform:scaleX(0.9564);">Data</div>
<div class="t" style="left:561.59px;top:73.00px;font-size:17.54px;line-height:17.54px;color:#2b2b2b;transform:scaleX(0.9081);">Review</div>
<div class="t" style="left:640.00px;top:73.00px;font-size:17.54px;line-height:17.54px;color:#2b2b2b;transform:scaleX(0.9547);">View</div>
<div class="t" style="left:700.30px;top:73.00px;font-size:17.54px;line-height:17.54px;color:#2b2b2b;transform:scaleX(1.0150);">Automate</div>
<div class="t" style="left:800.63px;top:73.00px;font-size:17.54px;line-height:17.54px;color:#2b2b2b;transform:scaleX(0.9687);">Help</div>
<div class="t" style="left:84.57px;top:73.00px;font-size:17.54px;line-height:17.54px;color:#141414;transform:scaleX(1.0286);-webkit-text-stroke:0.35px #141414;">Home</div>
<div class="t" style="left:1714.50px;top:73.00px;font-size:16.52px;line-height:16.52px;color:#242424;transform:scaleX(1.0328);">Comments</div>
<div class="t" style="left:1842.50px;top:73.00px;font-size:16.52px;line-height:16.52px;color:#ffffff;transform:scaleX(0.9570);-webkit-text-stroke:0.3px #fff;">Share</div>
<div class="t" style="left:35.03px;top:154.00px;font-size:15.07px;line-height:15.07px;color:#242424;transform:scaleX(0.8724);">Paste</div>
<div class="t" style="left:163.90px;top:120.00px;font-size:16.09px;line-height:16.09px;color:#242424;transform:scaleX(0.9306);">Aptos Narrow</div>
<div class="t" style="left:308.54px;top:120.00px;font-size:16.09px;line-height:16.09px;color:#242424;transform:scaleX(0.8573);">11</div>
<div class="t" style="left:708.60px;top:120.00px;font-size:16.09px;line-height:16.09px;color:#242424;transform:scaleX(0.8759);">General</div>
<div class="t" style="left:913.30px;top:153.00px;font-size:15.8px;line-height:15.8px;color:#242424;transform:scaleX(0.9691);">Conditional</div>
<div class="t" style="left:907.59px;top:172.00px;font-size:15.07px;line-height:15.07px;color:#242424;transform:scaleX(1.0098);">Formatting</div>
<div class="t" style="left:1002.38px;top:153.00px;font-size:15.8px;line-height:15.8px;color:#242424;transform:scaleX(0.9173);">Format as</div>
<div class="t" style="left:1012.90px;top:172.00px;font-size:15.07px;line-height:15.07px;color:#242424;transform:scaleX(0.9121);">Table</div>
<div class="t" style="left:1088.60px;top:153.00px;font-size:15.8px;line-height:15.8px;color:#242424;transform:scaleX(0.9362);">Cell</div>
<div class="t" style="left:1076.60px;top:172.00px;font-size:15.07px;line-height:15.07px;color:#242424;transform:scaleX(0.9238);">Styles</div>
<div class="t" style="left:1180.99px;top:111.00px;font-size:15.51px;line-height:15.51px;color:#242424;transform:scaleX(0.9075);">Insert</div>
<div class="t" style="left:1180.76px;top:143.00px;font-size:15.8px;line-height:15.8px;color:#242424;transform:scaleX(0.9426);">Delete</div>
<div class="t" style="left:1180.78px;top:175.00px;font-size:15.8px;line-height:15.8px;color:#242424;transform:scaleX(0.9206);">Format</div>
<div class="t" style="left:1354.30px;top:152.00px;font-size:15.8px;line-height:15.8px;color:#242424;transform:scaleX(0.9558);">Sort &</div>
<div class="t" style="left:1351.45px;top:173.00px;font-size:15.8px;line-height:15.8px;color:#242424;transform:scaleX(0.9485);">Filter</div>
<div class="t" style="left:1411.24px;top:152.00px;font-size:15.8px;line-height:15.8px;color:#242424;transform:scaleX(0.9641);">Find &</div>
<div class="t" style="left:1407.60px;top:173.00px;font-size:15.8px;line-height:15.8px;color:#242424;transform:scaleX(0.8963);">Select</div>
<div class="t" style="left:1487.30px;top:151.00px;font-size:16.23px;line-height:16.23px;color:#ababab;transform:scaleX(0.8918);">Sensitivity</div>
<div class="t" style="left:1579.00px;top:151.00px;font-size:16.23px;line-height:16.23px;color:#242424;transform:scaleX(0.9475);">Add-ins</div>
<div class="t" style="left:1657.00px;top:151.00px;font-size:16.23px;line-height:16.23px;color:#242424;transform:scaleX(0.8911);">Analyze</div>
<div class="t" style="left:1666.39px;top:171.00px;font-size:16.23px;line-height:16.23px;color:#242424;transform:scaleX(0.9083);">Data</div>
<div class="t" style="left:1716.60px;top:151.00px;font-size:16.23px;line-height:16.23px;color:#242424;transform:scaleX(0.9671);">Copilot</div>
<div class="t" style="left:43.50px;top:204.00px;font-size:13.33px;line-height:13.33px;color:#3d3d3d;transform:scaleX(1.0064);">Clipboard</div>
<div class="t" style="left:271.45px;top:204.00px;font-size:13.33px;line-height:13.33px;color:#3d3d3d;transform:scaleX(0.9474);">Font</div>
<div class="t" style="left:528.00px;top:204.00px;font-size:13.33px;line-height:13.33px;color:#3d3d3d;transform:scaleX(0.9721);">Alignment</div>
<div class="t" style="left:758.99px;top:204.00px;font-size:13.33px;line-height:13.33px;color:#3d3d3d;transform:scaleX(1.0114);">Number</div>
<div class="t" style="left:1000.70px;top:204.00px;font-size:13.33px;line-height:13.33px;color:#3d3d3d;transform:scaleX(0.8763);">Styles</div>
<div class="t" style="left:1194.20px;top:204.00px;font-size:13.33px;line-height:13.33px;color:#3d3d3d;transform:scaleX(0.8812);">Cells</div>
<div class="t" style="left:1353.29px;top:204.00px;font-size:13.33px;line-height:13.33px;color:#3d3d3d;transform:scaleX(1.0092);">Editing</div>
<div class="t" style="left:1491.20px;top:204.00px;font-size:13.33px;line-height:13.33px;color:#3d3d3d;transform:scaleX(0.9282);">Sensitivity</div>
<div class="t" style="left:1581.40px;top:204.00px;font-size:13.33px;line-height:13.33px;color:#3d3d3d;transform:scaleX(0.9753);">Add-ins</div>
<div class="t" style="left:18.30px;top:240.00px;font-size:17.1px;line-height:17.1px;color:#242424;transform:scaleX(0.8959);">J11</div>
<div class="t" style="left:37.54px;top:300.00px;font-size:16.52px;line-height:16.52px;color:#000000;transform:scaleX(0.9602);">Legal Nam</div>
<div class="t" style="left:118.30px;top:300.00px;font-size:16.52px;line-height:16.52px;color:#000000;transform:scaleX(0.9612);">Organization Code*</div>
<div class="t" style="left:283.50px;top:300.00px;font-size:16.52px;line-height:16.52px;color:#000000;transform:scaleX(0.9613);">Organization Name</div>
<div class="t" style="left:459.30px;top:300.00px;font-size:16.52px;line-height:16.52px;color:#000000;transform:scaleX(0.9034);">AKA Organ</div>
<div class="t" style="left:539.50px;top:300.00px;font-size:16.52px;line-height:16.52px;color:#000000;transform:scaleX(0.9511);">Street</div>
<div class="t" style="left:619.30px;top:300.00px;font-size:16.52px;line-height:16.52px;color:#000000;transform:scaleX(0.9317);">Suite</div>
<div class="t" style="left:699.50px;top:300.00px;font-size:16.52px;line-height:16.52px;color:#000000;transform:scaleX(0.9217);">City</div>
<div class="t" style="left:779.50px;top:300.00px;font-size:16.52px;line-height:16.52px;color:#000000;transform:scaleX(0.9621);">State/Prov</div>
<div class="t" style="left:875.86px;top:300.00px;font-size:16.52px;line-height:16.52px;color:#000000;transform:scaleX(0.9449);">Postal Code</div>
<div class="t" style="left:968.50px;top:300.00px;font-size:16.52px;line-height:16.52px;color:#000000;transform:scaleX(0.9476);">Country</div>
<div class="t" style="left:1048.06px;top:300.00px;font-size:16.52px;line-height:16.52px;color:#000000;transform:scaleX(0.9449);">Phone# 3</div>
<div class="t" style="left:1127.86px;top:300.00px;font-size:16.52px;line-height:16.52px;color:#000000;transform:scaleX(0.9449);">Phone# 2</div>
<div class="t" style="left:1207.76px;top:300.00px;font-size:16.52px;line-height:16.52px;color:#000000;transform:scaleX(0.9377);">Phone# 1</div>
<div class="t" style="left:1288.01px;top:300.00px;font-size:16.52px;line-height:16.52px;color:#000000;transform:scaleX(0.9867);">Email</div>
<div class="t" style="left:1367.92px;top:300.00px;font-size:16.52px;line-height:16.52px;color:#000000;transform:scaleX(0.8800);">Fax</div>
<div class="t" style="left:1443.30px;top:300.00px;font-size:16.52px;line-height:16.52px;color:#000000;transform:scaleX(0.9818);">Website</div>
<div class="t" style="left:1522.51px;top:300.00px;font-size:16.52px;line-height:16.52px;color:#000000;transform:scaleX(0.9857);">Registration</div>
<div class="t" style="left:1618.50px;top:300.00px;font-size:16.52px;line-height:16.52px;color:#000000;transform:scaleX(0.8537);">SSN</div>
<div class="t" style="left:1698.40px;top:300.00px;font-size:16.52px;line-height:16.52px;color:#000000;transform:scaleX(0.9556);">Active</div>
<div class="t" style="left:1778.70px;top:300.00px;font-size:16.52px;line-height:16.52px;color:#000000;transform:scaleX(0.9015);">OM Only</div>
<div class="t" style="left:117.88px;top:324.00px;font-size:16.52px;line-height:16.52px;color:#000000;transform:scaleX(0.9174);">NEWORG1</div>
<div class="t" style="left:283.05px;top:324.00px;font-size:16.52px;line-height:16.52px;color:#000000;transform:scaleX(0.9523);">New Organization 1</div>
<div class="t" style="left:698.85px;top:324.00px;font-size:16.52px;line-height:16.52px;color:#000000;transform:scaleX(0.9526);">New York</div>
<div class="t" style="left:778.91px;top:324.00px;font-size:16.52px;line-height:16.52px;color:#000000;transform:scaleX(0.8893);">NY</div>
<div class="t" style="left:907.23px;top:324.00px;font-size:16.52px;line-height:16.52px;color:#000000;transform:scaleX(0.9680);">123456</div>
<div class="t" style="left:1698.40px;top:324.00px;font-size:16.52px;line-height:16.52px;color:#000000;transform:scaleX(0.7818);">Y</div>
<div class="t" style="left:1778.70px;top:324.00px;font-size:16.52px;line-height:16.52px;color:#000000;transform:scaleX(0.7545);">Y</div>
<div class="t" style="left:117.88px;top:348.00px;font-size:16.52px;line-height:16.52px;color:#000000;transform:scaleX(0.9245);">NEWORG2</div>
<div class="t" style="left:283.04px;top:348.00px;font-size:16.52px;line-height:16.52px;color:#000000;transform:scaleX(0.9579);">New Organization 2</div>
<div class="t" style="left:699.80px;top:348.00px;font-size:16.52px;line-height:16.52px;color:#000000;transform:scaleX(0.9690);">Toronto</div>
<div class="t" style="left:779.80px;top:348.00px;font-size:16.52px;line-height:16.52px;color:#000000;transform:scaleX(0.9226);">ON</div>
<div class="t" style="left:875.85px;top:348.00px;font-size:16.52px;line-height:16.52px;color:#000000;transform:scaleX(0.9455);">M2H 1G6</div>
<div class="t" style="left:1698.40px;top:348.00px;font-size:16.52px;line-height:16.52px;color:#000000;transform:scaleX(0.7818);">Y</div>
<div class="t" style="left:1777.65px;top:348.00px;font-size:16.52px;line-height:16.52px;color:#000000;transform:scaleX(1.0500);">N</div>
<div class="t" style="left:54.5px;width:40px;text-align:center;top:274.98px;font-size:16.5px;line-height:16.5px;color:#4a4a4a;transform:scaleX(0.93);transform-origin:50% 0">A</div><div class="t" style="left:177.0px;width:40px;text-align:center;top:274.98px;font-size:16.5px;line-height:16.5px;color:#4a4a4a;transform:scaleX(0.93);transform-origin:50% 0">B</div><div class="t" style="left:347.4px;width:40px;text-align:center;top:274.98px;font-size:16.5px;line-height:16.5px;color:#4a4a4a;transform:scaleX(0.93);transform-origin:50% 0">C</div><div class="t" style="left:475.6px;width:40px;text-align:center;top:274.98px;font-size:16.5px;line-height:16.5px;color:#4a4a4a;transform:scaleX(0.93);transform-origin:50% 0">D</div><div class="t" style="left:555.7px;width:40px;text-align:center;top:274.98px;font-size:16.5px;line-height:16.5px;color:#4a4a4a;transform:scaleX(0.93);transform-origin:50% 0">E</div><div class="t" style="left:635.5px;width:40px;text-align:center;top:274.98px;font-size:16.5px;line-height:16.5px;color:#4a4a4a;transform:scaleX(0.93);transform-origin:50% 0">F</div><div class="t" style="left:715.4px;width:40px;text-align:center;top:274.98px;font-size:16.5px;line-height:16.5px;color:#4a4a4a;transform:scaleX(0.93);transform-origin:50% 0">G</div><div class="t" style="left:803.9px;width:40px;text-align:center;top:274.98px;font-size:16.5px;line-height:16.5px;color:#4a4a4a;transform:scaleX(0.93);transform-origin:50% 0">H</div><div class="t" style="left:898.3px;width:40px;text-align:center;top:274.98px;font-size:16.5px;line-height:16.5px;color:#4a4a4a;transform:scaleX(0.93);transform-origin:50% 0">I</div><div class="t" style="left:984.4px;width:40px;text-align:center;top:274.98px;font-size:16.5px;line-height:16.5px;color:#107c41;transform:scaleX(0.93);transform-origin:50% 0">J</div><div class="t" style="left:1064.5px;width:40px;text-align:center;top:274.98px;font-size:16.5px;line-height:16.5px;color:#4a4a4a;transform:scaleX(0.93);transform-origin:50% 0">K</div><div class="t" style="left:1144.5px;width:40px;text-align:center;top:274.98px;font-size:16.5px;line-height:16.5px;color:#4a4a4a;transform:scaleX(0.93);transform-origin:50% 0">L</div><div class="t" style="left:1224.5px;width:40px;text-align:center;top:274.98px;font-size:16.5px;line-height:16.5px;color:#4a4a4a;transform:scaleX(0.93);transform-origin:50% 0">M</div><div class="t" style="left:1304.5px;width:40px;text-align:center;top:274.98px;font-size:16.5px;line-height:16.5px;color:#4a4a4a;transform:scaleX(0.93);transform-origin:50% 0">N</div><div class="t" style="left:1382.1px;width:40px;text-align:center;top:274.98px;font-size:16.5px;line-height:16.5px;color:#4a4a4a;transform:scaleX(0.93);transform-origin:50% 0">O</div><div class="t" style="left:1459.6px;width:40px;text-align:center;top:274.98px;font-size:16.5px;line-height:16.5px;color:#4a4a4a;transform:scaleX(0.93);transform-origin:50% 0">P</div><div class="t" style="left:1547.0px;width:40px;text-align:center;top:274.98px;font-size:16.5px;line-height:16.5px;color:#4a4a4a;transform:scaleX(0.93);transform-origin:50% 0">Q</div><div class="t" style="left:1634.4px;width:40px;text-align:center;top:274.98px;font-size:16.5px;line-height:16.5px;color:#4a4a4a;transform:scaleX(0.93);transform-origin:50% 0">R</div><div class="t" style="left:1714.3px;width:40px;text-align:center;top:274.98px;font-size:16.5px;line-height:16.5px;color:#4a4a4a;transform:scaleX(0.93);transform-origin:50% 0">S</div><div class="t" style="left:1794.2px;width:40px;text-align:center;top:274.98px;font-size:16.5px;line-height:16.5px;color:#4a4a4a;transform:scaleX(0.93);transform-origin:50% 0">T</div><div class="t" style="left:1874.2px;width:40px;text-align:center;top:274.98px;font-size:16.5px;line-height:16.5px;color:#4a4a4a;transform:scaleX(0.93);transform-origin:50% 0">U</div><div class="t" style="left:0px;width:34px;text-align:center;top:298.58px;font-size:16.5px;line-height:16.5px;color:#4a4a4a;transform:scaleX(0.93);transform-origin:50% 0">1</div><div class="t" style="left:0px;width:34px;text-align:center;top:322.58px;font-size:16.5px;line-height:16.5px;color:#4a4a4a;transform:scaleX(0.93);transform-origin:50% 0">2</div><div class="t" style="left:0px;width:34px;text-align:center;top:346.58px;font-size:16.5px;line-height:16.5px;color:#4a4a4a;transform:scaleX(0.93);transform-origin:50% 0">3</div><div class="t" style="left:0px;width:34px;text-align:center;top:370.58px;font-size:16.5px;line-height:16.5px;color:#4a4a4a;transform:scaleX(0.93);transform-origin:50% 0">4</div><div class="t" style="left:0px;width:34px;text-align:center;top:394.58px;font-size:16.5px;line-height:16.5px;color:#4a4a4a;transform:scaleX(0.93);transform-origin:50% 0">5</div><div class="t" style="left:0px;width:34px;text-align:center;top:418.58px;font-size:16.5px;line-height:16.5px;color:#4a4a4a;transform:scaleX(0.93);transform-origin:50% 0">6</div><div class="t" style="left:0px;width:34px;text-align:center;top:442.58px;font-size:16.5px;line-height:16.5px;color:#4a4a4a;transform:scaleX(0.93);transform-origin:50% 0">7</div>
<div class="abs" style="left:35px;top:295px;width:79px;height:24px;overflow:hidden">
<div style="position:absolute;left:-35px;top:-295px"></div></div>
<div class="abs" style="left:456px;top:295px;width:79px;height:24px;overflow:hidden">
<div style="position:absolute;left:-456px;top:-295px"></div></div>
<div class="abs" style="left:1855px;top:295px;width:40px;height:24px;overflow:hidden">
<div style="position:absolute;left:-1855px;top:-295px"><div class="t" style="left:1857.77px;top:300.00px;font-size:16.52px;line-height:16.52px;color:#000000;transform:scaleX(0.9290);">National</div></div></div>

<!-- scrollbar -->
<div class="abs" style="left:1896px;top:272px;width:23px;height:200px;background:#f3f3f3;border-radius:8px 8px 0 0"></div>
<div class="abs" style="left:1903px;top:292px;width:11px;height:180px;background:#6e6e6e;border-radius:6px 6px 0 0"></div>
<svg class="abs" style="left:1896px;top:270px" width="25" height="20"><path d="M7.6,15 L12.8,7.8 L18,15 Z" fill="#6e6e6e" stroke="#6e6e6e" stroke-width="0.8" stroke-linejoin="round"/></svg>
<!-- bottom fade -->
<div class="abs" style="left:0px;top:422px;width:1921px;height:38px;background:linear-gradient(180deg,rgba(255,255,255,0) 0%,rgba(255,255,255,0.3) 35%,rgba(255,255,255,0.7) 65%,rgba(255,255,255,0.97) 100%)"></div>
</body></html>
